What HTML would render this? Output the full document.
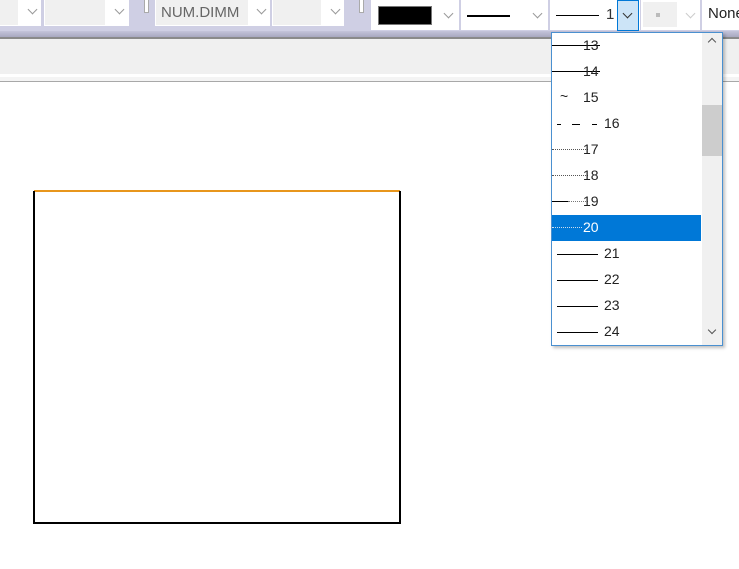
<!DOCTYPE html>
<html><head><style>
body{margin:0;width:739px;height:569px;overflow:hidden;background:#fff;font-family:"Liberation Sans",sans-serif;position:relative}
.a{position:absolute}
.tb{left:0;top:0;width:739px;height:31px;background:#cfcfe4}
.tb2{left:0;top:31px;width:739px;height:6px;background:linear-gradient(#c4c4da,#a8a8c0)}
.box{position:absolute;top:0;height:26px;background:#fff}
.in{position:absolute;top:0;height:25px;background:#f0f0f0}
.ch{position:absolute;top:6px;width:6px;height:6px;border-right:1px solid #999;border-bottom:1px solid #999;transform:rotate(45deg)}
.it{position:absolute;left:0;width:150px;height:26px;font-size:14px;color:#222}
.it span{position:absolute;left:52px;top:4px}
.ln{position:absolute;left:5px;top:13px;width:41px;height:1px;background:#000}
</style></head><body>
<div class="a tb"></div><div class="a tb2"></div>
<div class="a" style="top:37px;left:0;width:739px;height:2px;background:#8a8a8a"></div>
<div class="a" style="top:39px;left:0;width:739px;height:35px;background:#f0f0f0"></div>
<div class="a" style="top:77px;left:0;width:739px;height:4px;background:#f4f4f4"></div>
<div class="a" style="top:81px;left:0;width:739px;height:1px;background:#a8a8a8"></div>

<div class="box" style="left:0;width:41px"><div class="in" style="left:0;width:18px"></div><div class="ch" style="left:29px"></div></div>
<div class="box" style="left:44px;width:85px"><div class="in" style="left:1px;width:60px"></div><div class="ch" style="left:72px"></div></div>
<div class="a" style="left:144px;top:0;width:3px;height:12px;background:#fff;border:1px solid #aaa;border-top:none"></div>
<div class="box" style="left:155px;width:115px"><div class="in" style="left:1px;width:92px;color:#666;font-size:15px;line-height:25px;padding-left:5px;box-sizing:border-box">NUM.DIMM</div><div class="ch" style="left:103px"></div></div>
<div class="box" style="left:272px;width:72px"><div class="in" style="left:1px;width:48px"></div><div class="ch" style="left:60px"></div></div>
<div class="a" style="left:359px;top:0;width:3px;height:12px;background:#fff;border:1px solid #aaa;border-top:none"></div>
<div class="box" style="left:371px;width:88px;height:30px"><div class="a" style="left:7px;top:6px;width:52px;height:17px;background:#000;border:1px solid #777"></div><div class="ch" style="left:74px;top:10px"></div></div>
<div class="box" style="left:461px;width:87px;height:30px"><div class="a" style="left:6px;top:15px;width:43px;height:2px;background:#000"></div><div class="ch" style="left:73px;top:10px"></div></div>
<div class="box" style="left:550px;width:90px;height:30px"><div class="a" style="left:6px;top:15px;width:43px;height:1px;background:#000"></div><div class="a" style="left:56px;top:6px;font-size:15px;color:#333">1</div><div class="a" style="left:67px;top:0;width:20px;height:29px;background:#cce4f7;border:1px solid #0078d7"><div class="ch" style="left:6px;top:9px;border-color:#333"></div></div></div>
<div class="box" style="left:641px;width:59px;height:30px"><div class="a" style="left:2px;top:2px;width:34px;height:25px;background:#f0f0f0"></div><div class="a" style="left:15px;top:13px;width:4px;height:4px;background:#bbb"></div><div class="ch" style="left:46px;top:10px;border-color:#ccc"></div></div>
<div class="box" style="left:702px;width:37px;height:30px;font-size:15px;color:#222"><span class="a" style="left:6px;top:5px">None</span></div>

<div class="a" style="left:551px;top:32px;width:170px;height:312px;background:#fff;border:1px solid #4a90d0;box-shadow:2px 2px 3px rgba(0,0,0,.25);overflow:hidden">
 <div class="a" style="left:150px;top:0;width:20px;height:312px;background:#f0f0f0"></div>
 <div class="a" style="left:150px;top:72px;width:20px;height:51px;background:#cdcdcd"></div>
 <div class="a" style="left:157px;top:6px;width:5px;height:5px;border-left:1.5px solid #555;border-top:1.5px solid #555;transform:rotate(45deg)"></div>
 <div class="a" style="left:157px;top:294px;width:5px;height:5px;border-right:1.5px solid #555;border-bottom:1.5px solid #555;transform:rotate(45deg)"></div>
 <div class="it" style="top:0"><div class="a" style="left:0;top:12px;width:48px;height:1px;background:#000"></div><span style="left:31px">13</span></div>
 <div class="it" style="top:26px"><div class="a" style="left:0;top:12px;width:48px;height:1px;background:#000"></div><span style="left:31px">14</span></div>
 <div class="it" style="top:52px"><span style="left:8px;top:3px">~</span><span style="left:31px">15</span></div>
 <div class="it" style="top:78px"><div class="a" style="left:5px;top:13px;width:4px;height:1px;background:#000"></div><div class="a" style="left:20px;top:13px;width:8px;height:1px;background:#000"></div><div class="a" style="left:40px;top:13px;width:5px;height:1px;background:#000"></div><span>16</span></div>
 <div class="it" style="top:104px"><div class="a" style="left:0;top:12px;width:36px;border-top:1px dotted #555"></div><span style="left:31px">17</span></div>
 <div class="it" style="top:130px"><div class="a" style="left:0;top:12px;width:36px;border-top:1px dotted #555"></div><span style="left:31px">18</span></div>
 <div class="it" style="top:156px"><div class="a" style="left:0;top:12px;width:16px;height:1px;background:#000"></div><div class="a" style="left:16px;top:12px;width:20px;border-top:1px dotted #777"></div><span style="left:31px">19</span></div>
 <div class="it" style="top:182px;width:149px;background:#0078d7;color:#fff"><div class="a" style="left:0;top:12px;width:30px;border-top:1px dotted #cde"></div><span style="left:31px">20</span></div>
 <div class="it" style="top:208px"><div class="ln"></div><span>21</span></div>
 <div class="it" style="top:234px"><div class="ln"></div><span>22</span></div>
 <div class="it" style="top:260px"><div class="ln"></div><span>23</span></div>
 <div class="it" style="top:286px"><div class="ln"></div><span>24</span></div>
</div>

<div class="a" style="left:34px;top:190px;width:366px;height:2px;background:#e8961c"></div>
<div class="a" style="left:33px;top:191px;width:2px;height:333px;background:#000"></div>
<div class="a" style="left:399px;top:191px;width:2px;height:333px;background:#000"></div>
<div class="a" style="left:33px;top:522px;width:368px;height:2px;background:#000"></div>
</body></html>
